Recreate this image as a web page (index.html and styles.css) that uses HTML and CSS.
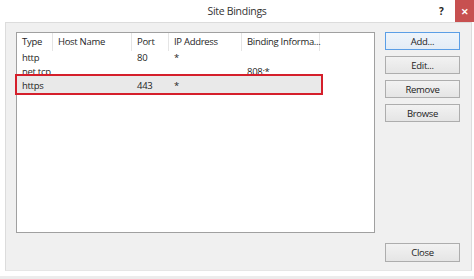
FILE: index.html
```html
<!DOCTYPE html>
<html lang="en">
<head>
    <meta charset="UTF-8">
    <title>Site Bindings</title>
    <link rel="stylesheet" href="styles.css">
</head>
<body>
    <div class="window">
        <div class="titlebar">
            <span class="title">Site Bindings</span>
            <span class="help">?</span>
            <span class="close-x">&#x2715;</span>
        </div>
        <div class="client">
            <div class="list">
                <div class="row head">
                    <span class="c1">Type</span>
                    <span class="c2">Host Name</span>
                    <span class="c3">Port</span>
                    <span class="c4">IP Address</span>
                    <span class="c5">Binding Informa...</span>
                </div>
                <div class="row">
                    <span class="c1">http</span>
                    <span class="c2"></span>
                    <span class="c3">80</span>
                    <span class="c4">*</span>
                    <span class="c5"></span>
                </div>
                <div class="row">
                    <span class="c1">net.tcp</span>
                    <span class="c2"></span>
                    <span class="c3"></span>
                    <span class="c4"></span>
                    <span class="c5">808:*</span>
                </div>
                <div class="row sel">
                    <span class="c1">https</span>
                    <span class="c2"></span>
                    <span class="c3">443</span>
                    <span class="c4">*</span>
                </div>
            </div>
            <div class="side">
                <button class="default">Add...</button>
                <button>Edit...</button>
                <button>Remove</button>
                <button>Browse</button>
                <button class="close">Close</button>
            </div>
        </div>
        <div class="bottom"></div>
    </div>
</body>
</html>
```
FILE: styles.css
```css
body {
    margin: 0;
    background: #fff;
    font-family: "Open Sans", "Noto Sans", sans-serif;
    font-size: 9.5px;
    letter-spacing: -0.3px;
    color: #1e1e1e;
}
.window {
    width: 474px;
    height: 279px;
    overflow: hidden;
}
.titlebar {
    height: 22px;
    display: flex;
    align-items: center;
}
.title {
    flex: 1;
    text-align: center;
    font-size: 10.5px;
    color: #333;
    padding-left: 35px;
}
.help {
    width: 16px;
    font-weight: bold;
    font-size: 10px;
    color: #222;
}
.close-x {
    width: 19px;
    height: 22px;
    background: #c75050;
    color: #fff;
    font-size: 9px;
    font-weight: bold;
    display: flex;
    align-items: center;
    justify-content: center;
}
.client {
    margin: 0 2px 0 5px;
    height: 249px;
    background: #f0f0f0;
    border: 1px solid #dcdcdc;
    border-bottom-color: #e6e6e6;
    display: flex;
    padding: 9px 10px 8px 10px;
    box-sizing: border-box;
    gap: 10px;
}
.list {
    width: 359px;
    height: 201px;
    background: #fff;
    border: 1px solid #a0a0a0;
    box-sizing: border-box;
}
.row {
    display: flex;
    height: 14px;
    line-height: 14px;
}
.row.head {
    height: 18px;
    line-height: 18px;
}
.row span {
    padding-left: 5px;
    box-sizing: border-box;
    white-space: nowrap;
}
.head span {
    border-right: 1px solid #e5e5e5;
}
.c1 { width: 36px; }
.c2 { width: 79px; }
.c3 { width: 37px; }
.c4 { width: 73px; }
.c5 { width: 78px; }
/* selected row, marked with a red frame */
.row.sel {
    position: relative;
    margin: -5px 0 0 -2px;
    width: 308px;
    height: 21px;
    padding-top: 3px;
    border: 2px solid #d51f2b;
    background: #e9e9e9;
    box-sizing: border-box;
}
.side {
    width: 75px;
    display: flex;
    flex-direction: column;
    gap: 6px;
}
button {
    font-family: inherit;
    font-size: 9.5px;
    letter-spacing: -0.3px;
    color: #222;
    height: 18px;
    padding: 0;
    border: 1px solid #adadad;
    background: linear-gradient(#f2f2f2, #e5e5e5);
}
button.default {
    border-color: #5a9ee6;
    background: linear-gradient(#eef4fb, #e3ecf6);
}
button.close {
    margin-top: auto;
    height: 19px;
}
.bottom {
    margin-top: 5px;
    height: 3px;
    background: #ececec;
}
```
